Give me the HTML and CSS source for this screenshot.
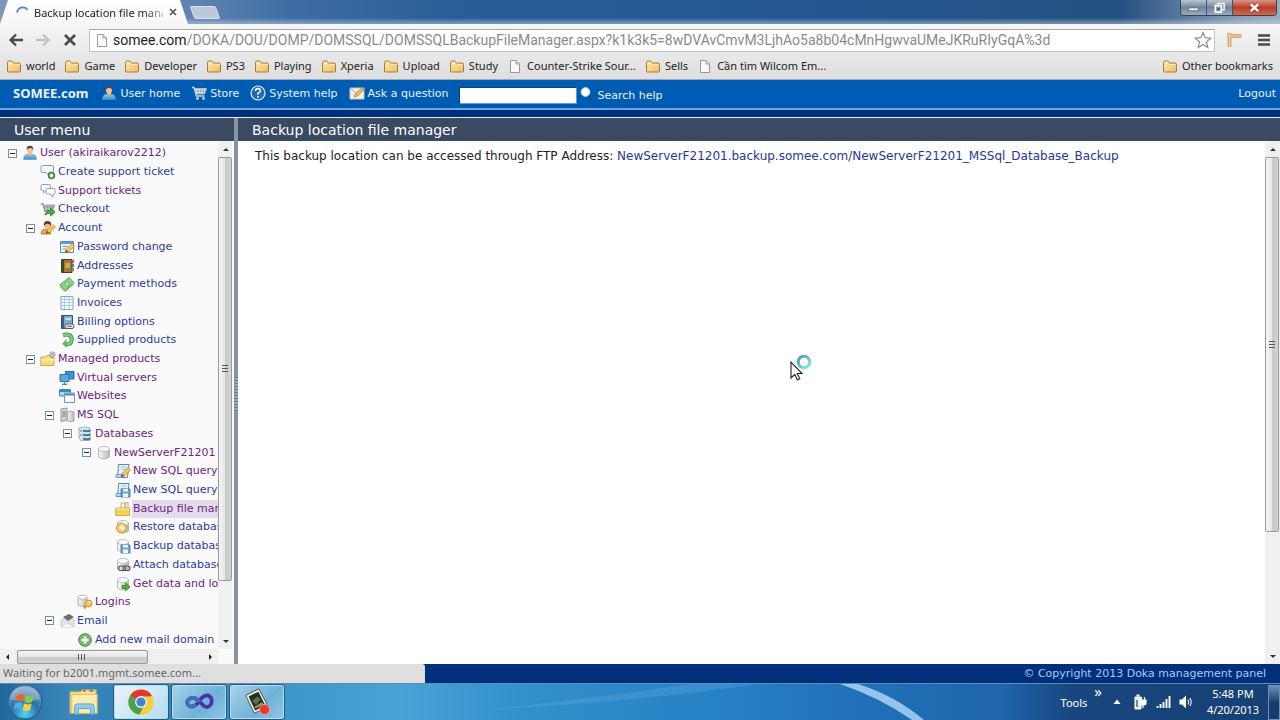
FILE: index.html
```html
<!DOCTYPE html>
<html lang="en">
<head>
<meta charset="utf-8">
<title>Backup location file manager</title>
<link rel="stylesheet" href="styles.css">
</head>
<body>
<svg class="defs" aria-hidden="true">
  <defs>
    <linearGradient id="gFolder" x1="0" y1="0" x2="1" y2="1"><stop offset="0" stop-color="#fde9b0"/><stop offset="1" stop-color="#f3bd62"/></linearGradient>
    <linearGradient id="gPerson" x1="0" y1="0" x2="0" y2="1"><stop offset="0" stop-color="#8fd0f0"/><stop offset="1" stop-color="#3a8fc4"/></linearGradient>
    <linearGradient id="gCyl" x1="0" y1="0" x2="1" y2="0"><stop offset="0" stop-color="#fdfdfd"/><stop offset="1" stop-color="#b5b5b5"/></linearGradient>
    <radialGradient id="gOrb" cx=".5" cy=".85" r=".9"><stop offset="0" stop-color="#4fd8f8"/><stop offset=".45" stop-color="#2a6fa8"/><stop offset="1" stop-color="#8fb4d0"/></radialGradient>
    <linearGradient id="gRing" x1="0" y1="0" x2="1" y2="1"><stop offset="0" stop-color="#4a9a9a"/><stop offset=".5" stop-color="#6fc4c0"/><stop offset="1" stop-color="#8af0dc"/></linearGradient>
  </defs>
  <symbol id="folder" viewBox="0 0 16 16"><path d="M1.500 13V4.500Q1.500 3 3 3H5.500Q6.500 3 7 4.500L7.500 5H13Q14.500 5 14.500 6.500V13Q14.500 14 13.500 14H2.500Q1.500 14 1.500 13Z" fill="url(#gFolder)" stroke="#a87c38"/><path d="M3 5H6M9 6.500H13" stroke="#fff3cf"/></symbol>
  <symbol id="page" viewBox="0 0 16 16"><path d="M3.500 2.500H9L12.500 6V14.500H3.500Z" fill="#fafafa" stroke="#999"/><path d="M9 2.500V6H12.500" fill="none" stroke="#999"/></symbol>
  <symbol id="person" viewBox="0 0 16 16"><path d="M1.500 14.500Q1.500 10 5 9L8 11L11 9Q14.500 10 14.500 14.500Z" fill="url(#gPerson)" stroke="#5b9cc2" stroke-width=".6"/><path d="M6 7H10V9.500L8 11L6 9.500Z" fill="#e9b58e"/><ellipse cx="8" cy="5" rx="3" ry="3.800" fill="#f0c29c"/><path d="M4.800 5Q4 .8 8 .8Q11.800 1 11.200 5Q10.500 3 8 3Q5.500 3.200 4.800 5Z" fill="#5d4335"/></symbol>
  <symbol id="cart" viewBox="0 0 16 16"><path d="M1 3H3L5 10.500H13" fill="none" stroke="#8c8c8c" stroke-width="1.300"/><path d="M3.500 4H15L13 9H5Z" fill="#c9d0d2" stroke="#8b9396" stroke-width=".7"/><path d="M4 6H14M7 4V9M10 4V9M12.500 4V9" stroke="#7f888c" stroke-width=".7"/><circle cx="6" cy="13" r="1.300" fill="#777"/><circle cx="12" cy="13" r="1.300" fill="#777"/></symbol>
  <symbol id="storecart" viewBox="0 0 16 16"><path d="M1 2.500H3L5.500 11H13.500" fill="none" stroke="#c9d3dc" stroke-width="1.500"/><path d="M3.500 3.500H15.500L13.500 9H5Z" fill="#e6ecf1" stroke="#bcc9d4" stroke-width=".7"/><path d="M4 6H15M7 4V9M10 4V9M12.500 4V9" stroke="#7c93a8" stroke-width=".7"/><circle cx="6.500" cy="13.500" r="1.400" fill="#c2ccd5"/><circle cx="12.500" cy="13.500" r="1.400" fill="#c2ccd5"/></symbol>
  <symbol id="garrow" viewBox="0 0 16 16"><path d="M7 9.500H10.500V7L15 11L10.500 15V12.500H7Z" fill="#4fae38" stroke="#2a7d1c" stroke-width=".7"/></symbol>
  <symbol id="pencil" viewBox="0 0 16 16"><path d="M6 14L7 10.500L13 4.500L15.500 7L9.500 13Z" fill="#f5c950" stroke="#b6852b" stroke-width=".7"/><path d="M6 14L7 10.500L9.500 13Z" fill="#7b5a36"/></symbol>
  <symbol id="bubbles" viewBox="0 0 16 16"><path d="M2.500 1.500H9Q10.500 1.500 10.500 3V6Q10.500 7.500 9 7.500H6L3.500 10V7.500H2.500Q1 7.500 1 6V3Q1 1.500 2.500 1.500Z" fill="#f4f8fc" stroke="#7996b3" stroke-width=".9"/><path d="M7.500 5.500H13.500Q15 5.500 15 7V9.500Q15 11 13.500 11H13V14L10 11H7.500Q6 11 6 9.500V7Q6 5.500 7.500 5.500Z" fill="#fff" stroke="#7996b3" stroke-width=".9"/></symbol>
  <symbol id="bubbleadd" viewBox="0 0 16 16"><path d="M2.500 1.500H12Q13.500 1.500 13.500 3V7Q13.500 8.500 12 8.500H9V12L6 8.500H2.500Q1 8.500 1 7V3Q1 1.500 2.500 1.500Z" fill="#f4f8fc" stroke="#7996b3" stroke-width=".9"/><circle cx="11.500" cy="11.500" r="2.800" fill="#fff" stroke="#388c35" stroke-width="1.800"/></symbol>
  <symbol id="checkout" viewBox="0 0 16 16"><use href="#cart"/><use href="#garrow"/></symbol>
  <symbol id="account" viewBox="0 0 16 16"><path d="M1 14Q1 9.500 5 9L9 10L11 14Z" fill="#e7a45b" stroke="#a56b2d" stroke-width=".7"/><circle cx="7.500" cy="5.500" r="3.200" fill="#f0bd90"/><path d="M4 6Q3 1 8 1Q12 1.500 11 6Q9 3 6 4Z" fill="#573927"/><use href="#pencil"/></symbol>
  <symbol id="form" viewBox="0 0 16 16"><path d="M1.500 2.500H14.500V13.500H1.500Z" fill="#eef6fd" stroke="#5b8fc4"/><path d="M2 3H14V5H2Z" fill="#5f9edb"/><path d="M3.500 7.500H9M3.500 10H7" stroke="#76a0c8"/><use href="#pencil"/></symbol>
  <symbol id="book" viewBox="0 0 16 16"><path d="M2.500 1.500H13V14.500H2.500Z" fill="#a5763b" stroke="#4c4229"/><path d="M3 2H5V14H3Z" fill="#394a2c"/><path d="M6.500 5H11V10H6.500Z" fill="#cea94e"/><path d="M14 2V5" stroke="#d54b4b" stroke-width="2"/><path d="M14 6V9" stroke="#4b78d5" stroke-width="2"/><path d="M14 10V13" stroke="#51a94b" stroke-width="2"/></symbol>
  <symbol id="money" viewBox="0 0 16 16"><path d="M1 9L10 1.500L15 6.500L6 14.500Z" fill="#8fd08a" stroke="#4d9b52" stroke-width=".9"/><path d="M1 10.500L6 15.500L15 8" fill="none" stroke="#5dab60"/><circle cx="8" cy="8" r="2" fill="#c3ebbb" stroke="#5ba75d" stroke-width=".7"/></symbol>
  <symbol id="invoice" viewBox="0 0 16 16"><path d="M2 1.500H14V14.500H2Z" fill="#f5faff" stroke="#7fa8d0"/><path d="M2 4.500H14M2 7.500H14M2 10.500H14M5.500 2V14M10 2V14" stroke="#a3c6e6" stroke-width=".9"/></symbol>
  <symbol id="billing" viewBox="0 0 16 16"><path d="M2.500 1.500H13.500V14.500H2.500Z" fill="#7faad2" stroke="#31557c"/><path d="M3 2H5V14H3Z" fill="#395f88"/><path d="M6.500 4H12V6H6.500Z" fill="#c8def2"/><rect x="6" y="10" width="9" height="4.500" rx="2" fill="#eee" stroke="#4e5a66"/><path d="M8 12.300H13" stroke="#4e5a66"/></symbol>
  <symbol id="supplied" viewBox="0 0 16 16"><path d="M4 3Q13 1 12.800 8Q12 13 6 12.500" fill="none" stroke="#328c3a" stroke-width="4"/><path d="M4 3Q13 1 12.800 8Q12 13 6 12.500" fill="none" stroke="#83c985" stroke-width="2.400"/><path d="M7.500 7L3 12L8 15.500Z" fill="#62b467"/></symbol>
  <symbol id="managed" viewBox="0 0 16 16"><path d="M.8 6H5L6.500 4.500H10L10.500 6.500H14V14.500H.8Z" fill="#f6dc79" stroke="#c29c3a" stroke-width=".8"/><path d="M1 9H14" stroke="#fff2b8" stroke-width="1.500"/><circle cx="12.500" cy="3.500" r="2.600" fill="#d9cfdb" stroke="#a295a5"/><circle cx="12.500" cy="3.500" r=".8" fill="#776a7a"/></symbol>
  <symbol id="vserver" viewBox="0 0 16 16"><path d="M6.500 1.500H15V9H6.500Z" fill="#3d94d4" stroke="#2c699e"/><path d="M1 4.500H10V11.500H1Z" fill="#56a9df" stroke="#2d75ac"/><path d="M5.500 11V14M3 14.300H8" stroke="#6d8294" stroke-width="1.300"/></symbol>
  <symbol id="website" viewBox="0 0 16 16"><path d="M.5 1.500H11.500V8H.5Z" fill="#a9d8ea" stroke="#3e90b1"/><path d="M1 2H11V4H1Z" fill="#348faf"/><path d="M5.500 5H15.500V14.500H5.500Z" fill="#f5fbfe" stroke="#7197b1"/><path d="M6 5.500H15V7.500H6Z" fill="#3e92bf"/></symbol>
  <symbol id="mssql" viewBox="0 0 16 16"><path d="M2 2L8 1V13L2 14.500Z" fill="#d3d3d3" stroke="#9b9b9b"/><path d="M3.500 5H6.500M3.500 7H6.500M3.500 9H6.500" stroke="#747474"/><path d="M8.500 5Q11.500 3.500 15 5V14Q11.500 15.500 8.500 14Z" fill="url(#gCyl)" stroke="#aaa"/></symbol>
  <symbol id="stack" viewBox="0 0 16 16"><path d="M2 2L7 1L13 2V14.500H4L2 12Z" fill="#d8eaf4" stroke="#7d9bb0" stroke-width=".7"/><path d="M6 4.500Q9.500 6 13.500 4.500M6 8.500Q9.500 10 13.500 8.500M6 12.500Q9.500 14 13.500 12.500" fill="none" stroke="#487795" stroke-width="2"/><path d="M3 5H5M3 9H5" stroke="#506f85"/></symbol>
  <symbol id="cyl" viewBox="0 0 16 16"><path d="M2.500 4V12Q8 16 13.500 12V4Z" fill="url(#gCyl)" stroke="#aaa" stroke-width=".8"/><ellipse cx="8" cy="4" rx="5.500" ry="2.500" fill="#f8f8f8" stroke="#b5b5b5" stroke-width=".8"/></symbol>
  <symbol id="script" viewBox="0 0 16 16"><path d="M3.500 1.500H14L12.500 14.500H1.500Q3 13 3 10Z" fill="#e5f2fc" stroke="#5689bf"/><path d="M1 11.500H7V14.500H1Z" fill="#b9d8f2" stroke="#5689bf" stroke-width=".7"/><path d="M6 4H11M6 6.500H11" stroke="#a1c2df"/></symbol>
  <symbol id="query" viewBox="0 0 16 16"><use href="#script"/><use href="#pencil"/></symbol>
  <symbol id="disk" viewBox="0 0 16 16"><path d="M6 7H15V15H6Z" fill="#6fa3d6" stroke="#3d70a6" stroke-width=".8"/><path d="M8 7H13V9.500H8ZM8 11.500H13V15H8Z" fill="#edf6fd"/></symbol>
  <symbol id="querysave" viewBox="0 0 16 16"><use href="#script"/><use href="#disk"/></symbol>
  <symbol id="fileman" viewBox="0 0 16 16"><path d="M6 2H10V8H6ZM10.500 1.500H13V8H10.500Z" fill="#fff5d6" stroke="#b2a06b" stroke-width=".8"/><path d="M.8 7H14.500V14.500H.8Z" fill="#f6d05a" stroke="#c79b30" stroke-width=".8"/><path d="M1.500 8H14" stroke="#fff0b0"/></symbol>
  <symbol id="restore" viewBox="0 0 16 16"><use href="#cyl"/><circle cx="6.500" cy="9" r="5" fill="#f3cb62" stroke="#b58a2c" stroke-width=".8"/><path d="M3.500 8.500L8 5.500V8H10V10H8V12Z" fill="#fff7d6"/></symbol>
  <symbol id="dbsave" viewBox="0 0 16 16"><use href="#cyl"/><use href="#disk"/></symbol>
  <symbol id="attach" viewBox="0 0 16 16"><use href="#cyl"/><rect x="3.500" y="9" width="7" height="4.500" rx="2.200" fill="#ddd" stroke="#555" stroke-width="1.200"/><rect x="8" y="9" width="7" height="4.500" rx="2.200" fill="none" stroke="#555" stroke-width="1.200"/></symbol>
  <symbol id="getdata" viewBox="0 0 16 16"><use href="#cyl"/><use href="#garrow"/></symbol>
  <symbol id="logins" viewBox="0 0 16 16"><path d="M1 3V11Q5 14 10 11V3Z" fill="url(#gCyl)" stroke="#999" stroke-width=".8"/><ellipse cx="5.500" cy="3.200" rx="4.500" ry="2" fill="#fff" stroke="#aaa" stroke-width=".8"/><path d="M7 14.500L10 10.500" stroke="#d69b24" stroke-width="2.400"/><circle cx="11.500" cy="9.500" r="3.500" fill="#f3c64f" stroke="#c08e27" stroke-width=".8"/><circle cx="12.500" cy="8.500" r="1" fill="#fff3c8"/></symbol>
  <symbol id="email" viewBox="0 0 16 16"><path d="M2 7L8 4L15 7V14H2Z" fill="#e3e3e3" stroke="#c2c2c2" stroke-width=".8"/><path d="M2 14L8 9.500L15 14" fill="#f8f8f8" stroke="#ccc" stroke-width=".8"/><path d="M4 4L10 1L15 4L9 8Z" fill="#6d6d6d"/></symbol>
  <symbol id="add" viewBox="0 0 16 16"><circle cx="8" cy="8" r="6.300" fill="#72bd69" stroke="#438b3d"/><path d="M8 4.500V11.500M4.500 8H11.500" stroke="#fff" stroke-width="2.400"/></symbol>
</svg>

<div class="browser">
  <div class="titlebar">
    <div class="tab">
      <svg class="spinner" viewBox="0 0 16 16"><path d="M2 8Q3.500 2.500 8.500 2.500Q12 2.700 13.500 5" fill="none" stroke="#5c7fc0" stroke-width="2"/></svg>
      <span class="tab-title">Backup location file manager</span>
      <button class="tab-close" aria-label="Close tab"><svg viewBox="0 0 8 8"><path d="M1 1L7 7M7 1L1 7" stroke="#555" stroke-width="1.700"/></svg></button>
    </div>
    <button class="new-tab" aria-label="New tab"></button>
    <div class="window-buttons">
      <button aria-label="Minimize"><svg viewBox="0 0 14 14"><rect x="2" y="7.500" width="10" height="3" fill="#fff" stroke="#4b5a6c" stroke-width=".7"/></svg></button>
      <button aria-label="Restore"><svg viewBox="0 0 14 14"><path d="M5 2.500H12V9.500H5Z" fill="none" stroke="#fff" stroke-width="1.500"/><path d="M2.500 5H9V12H2.500Z" fill="#8493a6" stroke="#fff" stroke-width="1.800"/><path d="M5 7.500H7V9.500H5Z" fill="#34435a"/></svg></button>
      <button class="win-close" aria-label="Close"><svg viewBox="0 0 14 14"><path d="M3 3.500L11 11M11 3.500L3 11" stroke="#6b2a20" stroke-width="3.800"/><path d="M3 3.500L11 11M11 3.500L3 11" stroke="#fff" stroke-width="2.600"/></svg></button>
    </div>
  </div>
  <div class="toolbar">
    <button class="nav" aria-label="Back"><svg viewBox="0 0 16 16"><path d="M15 8H3M8 2.500L2.500 8L8 13.500" fill="none" stroke="#4a4a4a" stroke-width="2.300"/></svg></button>
    <button class="nav" aria-label="Forward"><svg viewBox="0 0 16 16"><path d="M1 8H13M8 2.500L13.500 8L8 13.500" fill="none" stroke="#c3c3c3" stroke-width="2.300"/></svg></button>
    <button class="nav" aria-label="Stop"><svg viewBox="0 0 16 16"><path d="M3 3L13 13M13 3L3 13" stroke="#484848" stroke-width="2.600"/></svg></button>
    <div class="omnibox">
      <svg class="i16"><use href="#page"/></svg>
      <label for="url">somee.com</label>
      <input id="url" type="text" value="/DOKA/DOU/DOMP/DOMSSQL/DOMSSQLBackupFileManager.aspx?k1k3k5=8wDVAvCmvM3LjhAo5a8b04cMnHgwvaUMeJKRuRIyGqA%3d">
      <button class="star" aria-label="Bookmark"><svg viewBox="0 0 18 18"><path d="M9 1.500L11.200 6.700L16.800 7.200L12.500 10.900L13.800 16.400L9 13.500L4.200 16.400L5.500 10.900L1.200 7.200L6.800 6.700Z" fill="#fff" stroke="#8b8b8b" stroke-width="1.200"/></svg></button>
    </div>
    <button class="nav ext" aria-label="Extension"><svg viewBox="0 0 16 16"><path d="M3.500 1V15M1 4H15.500" stroke="#d8aa78" stroke-width="4"/><path d="M1 4H15M3.500 2V15" stroke="#f3d4ae" stroke-width="1"/></svg></button>
    <button class="nav" aria-label="Menu"><svg viewBox="0 0 16 16"><path d="M2 3.500H14M2 8H14M2 12.500H14" stroke="#4a4a4a" stroke-width="2.600"/></svg></button>
  </div>
  <nav class="bookmarks">
    <a href="#"><svg class="i16"><use href="#folder"/></svg>world</a>
    <a href="#"><svg class="i16"><use href="#folder"/></svg>Game</a>
    <a href="#"><svg class="i16"><use href="#folder"/></svg>Developer</a>
    <a href="#"><svg class="i16"><use href="#folder"/></svg>PS3</a>
    <a href="#"><svg class="i16"><use href="#folder"/></svg>Playing</a>
    <a href="#"><svg class="i16"><use href="#folder"/></svg>Xperia</a>
    <a href="#"><svg class="i16"><use href="#folder"/></svg>Upload</a>
    <a href="#"><svg class="i16"><use href="#folder"/></svg>Study</a>
    <a href="#"><svg class="i16"><use href="#page"/></svg>Counter-Strike Sour...</a>
    <a href="#"><svg class="i16"><use href="#folder"/></svg>Sells</a>
    <a href="#"><svg class="i16"><use href="#page"/></svg>Cần tìm Wilcom Em...</a>
    <a href="#" class="other"><svg class="i16"><use href="#folder"/></svg>Other bookmarks</a>
  </nav>
</div>

<header class="site-header">
  <a class="brand" href="#">SOMEE.com</a>
  <a href="#"><svg class="i16"><use href="#person"/></svg>User home</a>
  <a href="#"><svg class="i16"><use href="#storecart"/></svg>Store</a>
  <a href="#"><svg class="i16" viewBox="0 0 16 16"><circle cx="8" cy="8" r="7" fill="#2468b0" stroke="#e8f1fa" stroke-width="1.200"/><path d="M5.500 6Q5.500 3.500 8 3.500Q10.500 3.600 10.500 6Q10.300 7.300 8 8.300V9.700M8 11V12.700" fill="none" stroke="#fff" stroke-width="1.500"/></svg>System help</a>
  <a href="#"><svg class="i16" viewBox="0 0 16 16"><path d="M1 3H15V14H1Z" fill="#f5f2e8" stroke="#c8c6ba"/><path d="M1 3L8 9L15 3" fill="none" stroke="#8fa5b8"/><path d="M5 12L6 9L12.500 3L15 5L8.500 11Z" fill="#edb85a" stroke="#a57834" stroke-width=".6"/></svg>Ask a question</a>
  <form class="search">
    <input id="q" type="text" aria-label="Search help">
    <button type="button"><svg class="i16" viewBox="0 0 16 16"><path d="M9.500 8.500L14 13" stroke="#16508e" stroke-width="2.400"/><circle cx="6.500" cy="5" r="4.300" fill="#fff" stroke="#d8ecfa"/></svg><span>Search help</span></button>
  </form>
  <a class="logout" href="#">Logout</a>
</header>
<div class="strip"></div>

<div class="workspace">
  <aside class="sidebar">
    <h2>User menu</h2>
    <div class="tree-row">
      <ul class="tree">
        <li class="l0"><button aria-label="Collapse"></button><svg class="i16"><use href="#person"/></svg><a class="v" href="#">User (akiraikarov2212)</a></li>
        <li class="l1"><svg class="i16"><use href="#bubbleadd"/></svg><a href="#">Create support ticket</a></li>
        <li class="l1"><svg class="i16"><use href="#bubbles"/></svg><a class="v" href="#">Support tickets</a></li>
        <li class="l1"><svg class="i16"><use href="#checkout"/></svg><a href="#">Checkout</a></li>
        <li class="l1"><button aria-label="Collapse"></button><svg class="i16"><use href="#account"/></svg><a href="#">Account</a></li>
        <li class="l2"><svg class="i16"><use href="#form"/></svg><a href="#">Password change</a></li>
        <li class="l2"><svg class="i16"><use href="#book"/></svg><a href="#">Addresses</a></li>
        <li class="l2"><svg class="i16"><use href="#money"/></svg><a href="#">Payment methods</a></li>
        <li class="l2"><svg class="i16"><use href="#invoice"/></svg><a href="#">Invoices</a></li>
        <li class="l2"><svg class="i16"><use href="#billing"/></svg><a href="#">Billing options</a></li>
        <li class="l2"><svg class="i16"><use href="#supplied"/></svg><a href="#">Supplied products</a></li>
        <li class="l1"><button aria-label="Collapse"></button><svg class="i16"><use href="#managed"/></svg><a class="v" href="#">Managed products</a></li>
        <li class="l2"><svg class="i16"><use href="#vserver"/></svg><a class="v" href="#">Virtual servers</a></li>
        <li class="l2"><svg class="i16"><use href="#website"/></svg><a class="v" href="#">Websites</a></li>
        <li class="l2"><button aria-label="Collapse"></button><svg class="i16"><use href="#mssql"/></svg><a class="v" href="#">MS SQL</a></li>
        <li class="l3"><button aria-label="Collapse"></button><svg class="i16"><use href="#stack"/></svg><a class="v" href="#">Databases</a></li>
        <li class="l4"><button aria-label="Collapse"></button><svg class="i16"><use href="#cyl"/></svg><a class="v" href="#">NewServerF21201</a></li>
        <li class="l5"><svg class="i16"><use href="#query"/></svg><a class="v" href="#">New SQL query</a></li>
        <li class="l5"><svg class="i16"><use href="#querysave"/></svg><a href="#">New SQL query</a></li>
        <li class="l5 selected"><svg class="i16"><use href="#fileman"/></svg><a class="v" href="#">Backup file manager</a></li>
        <li class="l5"><svg class="i16"><use href="#restore"/></svg><a href="#">Restore database</a></li>
        <li class="l5"><svg class="i16"><use href="#dbsave"/></svg><a href="#">Backup database</a></li>
        <li class="l5"><svg class="i16"><use href="#attach"/></svg><a href="#">Attach database</a></li>
        <li class="l5"><svg class="i16"><use href="#getdata"/></svg><a class="v" href="#">Get data and log</a></li>
        <li class="l3"><svg class="i16"><use href="#logins"/></svg><a class="v" href="#">Logins</a></li>
        <li class="l2"><button aria-label="Collapse"></button><svg class="i16"><use href="#email"/></svg><a href="#">Email</a></li>
        <li class="l3"><svg class="i16"><use href="#add"/></svg><a href="#">Add new mail domain</a></li>
      </ul>
      <div class="vbar side-v"><i class="up"></i><div class="thumb"></div><div class="rest"></div><i class="down"></i></div>
    </div>
    <div class="hbar"><i class="left"></i><div class="thumb"></div><div class="rest"></div><i class="right"></i></div>
  </aside>
  <div class="splitter"></div>
  <main class="content">
    <h2>Backup location file manager</h2>
    <div class="content-row">
      <p>This backup location can be accessed through FTP Address: <a href="#">NewServerF21201.backup.somee.com/NewServerF21201_MSSql_Database_Backup</a></p>
      <div class="vbar main-v"><i class="up"></i><div class="thumb"></div><div class="rest"></div><i class="down"></i></div>
    </div>
  </main>
</div>

<footer class="site-footer">
  <span class="status">Waiting for b2001.mgmt.somee.com...</span>
  <span class="copy">© Copyright 2013 Doka management panel</span>
</footer>

<div class="taskbar">
  <svg class="streaks" viewBox="0 0 1280 37" preserveAspectRatio="none"><path d="M490 26Q640 18 760 0H690Q600 14 490 26Z" fill="#6db4e6" opacity=".25"/><path d="M840 0H858Q895 12 924 37H912Q880 14 840 0Z" fill="#a9d2f5" opacity=".85"/></svg>
  <button class="start" aria-label="Start"><svg viewBox="0 0 36 36"><circle cx="18" cy="18" r="17" fill="url(#gOrb)" stroke="#2c5878"/><path d="M3 15Q5 3 18 3Q31 3 33 15Q18 20 3 15Z" fill="#fff" opacity=".25"/><path d="M10 11Q14 8.500 17.500 11L16 17.500Q12 15.500 8.500 17.500Z" fill="#f0652d"/><path d="M19 11.500Q23 13.500 27 11.500L25 18Q21 20 17.500 18Z" fill="#8fca3d"/><path d="M8 19Q12 17 15.500 19L14 25.500Q10.500 23.500 6.500 25.500Z" fill="#4cadea"/><path d="M17 19.500Q21 21.500 24.700 19.500L23 26Q19 28 15.500 26Z" fill="#fbd03b"/></svg></button>
  <button class="task plain" aria-label="Explorer"><svg viewBox="0 0 36 32"><path d="M3 5H14L16 3H31V28H3Z" fill="#f3dc8a" stroke="#d0a94b"/><path d="M5 8H32V28H5Z" fill="#fbedb0" stroke="#dfbd62"/><path d="M7 4H11" stroke="#4faa51" stroke-width="2"/><path d="M17 4H20" stroke="#d85a49" stroke-width="2"/><path d="M24 4H28" stroke="#4586c9" stroke-width="2"/><path d="M8 29V21Q8 18 11 18H26Q29 18 29 21V29H25V23H12V29Z" fill="#8fcbea" stroke="#5aa4cf"/></svg></button>
  <button class="task active" aria-label="Chrome"><svg viewBox="0 0 32 32"><circle cx="16" cy="16" r="13.500" fill="#f6cf3d"/><path d="M16 16L4.300 9.300A13.500 13.500 0 0 1 27.700 9.300Z" fill="#db3c2f"/><path d="M4.300 9.300A13.500 13.500 0 0 0 14.500 29.400L20 18L16 16Z" fill="#4ba24a"/><path d="M16 10H28Q31 19 25 26Q21 29.500 14.500 29.400L21 19Z" fill="#f6cf3d"/><circle cx="16" cy="16" r="6.300" fill="#f5f5f5"/><circle cx="16" cy="16" r="4.900" fill="#3f82cf"/></svg></button>
  <button class="task" aria-label="Visual Studio"><svg viewBox="0 0 32 32"><path d="M17 16Q12 10 7 12Q2 14.500 4 18.500Q8 23.500 14 18Q20 8 26 9Q31 12 29 18Q26 23.500 21 20Z" fill="none" stroke="#4a35a0" stroke-width="4"/><path d="M17 16Q12 10 7 12Q2 14.500 4 18.500Q8 23 13 19" fill="none" stroke="#3b72b8" stroke-width="3.500"/></svg></button>
  <button class="task" aria-label="Screen recorder"><svg viewBox="0 0 32 32"><path d="M4 9L18 2L28 21L13 28Z" fill="#f0f0ec" stroke="#4a4f4a"/><path d="M7 10L17.500 5L25 20L14 25Z" fill="#27331f"/><path d="M11 15L16 10L20 13L15 19Z" fill="#59734a"/><path d="M14 22L22 17" stroke="#8fa374" stroke-width="2"/><circle cx="24" cy="24" r="5.500" fill="#e23d2f" stroke="#f6aaa0"/></svg></button>
  <div class="tray">
    <span>Tools</span><span class="chev">»</span>
    <svg class="i8" viewBox="0 0 8 8"><path d="M4 1.500L7.500 6H.5Z" fill="#fff"/></svg>
    <svg class="i16" viewBox="0 0 16 16"><path d="M3 3H9V15H3Z" fill="#e9eef3" stroke="#fff"/><path d="M4.500 1.500H7.500" stroke="#fff" stroke-width="2"/><path d="M5 6V13" stroke="#41668e" stroke-width="1.500"/><path d="M8 6H14V9Q14 11 11 11Q8 11 8 9ZM9.500 3V6M12.500 3V6M11 11V14" fill="#fff" stroke="#fff" stroke-width="1.200"/></svg>
    <svg class="i16" viewBox="0 0 16 16"><path d="M2.500 12V14M5.500 10V14M8.500 8V14M11.500 5V14M14.500 2V14" stroke="#fff" stroke-width="1.900"/></svg>
    <svg class="i16" viewBox="0 0 16 16"><path d="M1.500 5.500H4L8 1.500V14.500L4 10.500H1.500Z" fill="#fff"/><path d="M10 5.500Q11.500 8 10 10.500M12 4Q14.300 8 12 12" fill="none" stroke="#dfe9f3" stroke-width="1.200"/></svg>
    <div class="clock"><span>5:48 PM</span><span>4/20/2013</span></div>
    <button class="peek" aria-label="Show desktop"></button>
  </div>
</div>

<svg class="cursor" viewBox="0 0 24 28"><circle cx="15" cy="9" r="5.800" fill="#fff" stroke="url(#gRing)" stroke-width="3"/><path d="M2 9V25L5.800 21.500L8.300 27L10.800 25.800L8.300 20.500H13Z" fill="#fff" stroke="#222" stroke-width="1.100"/></svg>
</body>
</html>
```
FILE: styles.css
```css
* { box-sizing: border-box; }
body {
  margin: 0;
  min-height: 100vh;
  display: flex;
  flex-direction: column;
  overflow: hidden;
  position: relative;
  font-family: "DejaVu Sans", Verdana, sans-serif;
  font-size: 12px;
  color: #222;
  background: #fff;
}
a { text-decoration: none; color: inherit; }
button { border: 0; padding: 0; margin: 0; background: none; font: inherit; color: inherit; display: flex; align-items: center; justify-content: center; }
.defs { position: absolute; width: 0; height: 0; }
.i16 { width: 16px; height: 16px; flex: none; }
.i8 { width: 8px; height: 8px; flex: none; }

/* Browser chrome */
.browser { font-family: "Noto Sans", "Open Sans", sans-serif; flex: none; }
.titlebar {
  height: 24px;
  display: flex;
  background: linear-gradient(to bottom, transparent 18px, rgba(200, 215, 232, .45) 23px), linear-gradient(to right, #7c98b9 0, #5f83af 200px, #3f6da3 290px, #295e98 450px, #245791 850px, #24507f 1120px, #8a9fb8 1240px, #9bacc0);
}
.tab {
  width: 188px;
  display: flex;
  align-items: center;
  padding: 0 11px 0 15px;
  background: linear-gradient(#fff, #f6f6f6);
  clip-path: polygon(8px 0, 180px 0, 100% 100%, 0 100%);
  font-size: 11px;
  color: #222;
}
.spinner { width: 15px; height: 15px; flex: none; margin-right: 4px; }
.tab-title { flex: 1; overflow: hidden; white-space: nowrap; mask-image: linear-gradient(to right, #000 85%, rgba(0, 0, 0, .3)); }
.tab-close { width: 8px; margin: 0 0 0 6px; flex: none; }
.tab-close svg { width: 8px; height: 8px; }
.new-tab { width: 26px; height: 13px; margin: 6px 0 0 4px; background: #bcc9d9; border: 1px solid #dbe4ee; border-radius: 2px; transform: skewX(20deg); }
.window-buttons { margin: 0 3px 0 auto; height: 16px; display: flex; border: 1px solid #34435a; border-top: 0; border-radius: 0 0 4px 4px; overflow: hidden; }
.window-buttons button { width: 26px; background: linear-gradient(#b8c5d5, #71839b 50%, #9aaabf); border-right: 1px solid #43536a; }
.window-buttons .win-close { width: 43px; border: 0; background: linear-gradient(#d99585, #bb3d28 50%, #d36a4a); }
.window-buttons svg { width: 13px; height: 13px; }
.toolbar { height: 30px; display: flex; align-items: center; padding: 2px 8px 0; background: linear-gradient(#f6f6f6, #e9e9e9); }
.nav { width: 16px; height: 16px; margin-right: 11px; flex: none; }
.nav svg { width: 16px; height: 16px; }
.nav:last-child { margin: 0; }
.ext { margin: 0 14px 0 11px; }
.omnibox { flex: 1; height: 23px; display: flex; align-items: center; background: #fff; border: 1px solid #c0c0c0; border-top-color: #a9a9a9; padding: 0 2px 0 4px; font-family: Roboto, "Noto Sans", sans-serif; font-size: 14px; }
.omnibox label { color: #222; margin-left: 3px; }
.omnibox input { flex: 1; min-width: 0; border: 0; padding: 0; outline: 0; background: none; font: inherit; color: #8a8a8a; }
.star svg { width: 18px; height: 18px; }
.bookmarks { height: 26px; display: flex; align-items: center; gap: 9px; padding: 0 7px 2px 6px; background: linear-gradient(#e8e8e8, #dedede); border-bottom: 1px solid #9aa7b8; font-size: 11px; white-space: nowrap; }
.bookmarks a { display: flex; align-items: center; gap: 4px; color: #222; }
.bookmarks .other { margin-left: auto; }

/* Site header */
.site-header { height: 28px; flex: none; display: flex; align-items: center; gap: 11px; padding: 0 4px 2px 13px; background: #005cb2; color: #e9f3fc; font-size: 11px; white-space: nowrap; }
.site-header > a { display: flex; align-items: center; gap: 3px; }
.site-header .brand { font: bold 13px "Noto Sans", "Open Sans", sans-serif; margin-right: 2px; }
.site-header .logout { margin-left: auto; }
.search { display: flex; align-items: center; gap: 2px; padding-top: 4px; }
.search input { width: 118px; height: 17px; border: 1px solid #123f73; border-right-color: #5b9bd8; border-bottom-color: #5b9bd8; background: #fff; padding: 0 2px; font-size: 11px; }
.search button { gap: 2px; }
.strip { height: 10px; flex: none; background: #00307c; border-top: 2px solid #6ea6dc; border-bottom: 1px solid #e4edf8; }

/* Workspace */
.workspace { flex: 1; display: flex; min-height: 0; }
h2 { margin: 0; flex: none; height: 23px; line-height: 24px; font-size: 14px; font-weight: normal; color: #fff; background: #3a4a63; padding: 0 14px; }
.sidebar { width: 234px; flex: none; display: flex; flex-direction: column; background: #fafafa; }
.tree-row { flex: 1; display: flex; min-height: 0; }
.tree { flex: 1; min-width: 0; margin: 0; padding: 3px 0 0; list-style: none; display: flex; flex-direction: column; overflow: hidden; font-size: 11px; }
.tree li { flex: 1; display: flex; align-items: center; white-space: nowrap; }
.tree a { margin-left: 1px; padding: 0 1px; line-height: 18px; color: #2f3a9b; }
.tree a.v { color: #6d2480; }
.tree .selected a { flex: 1; background: #e4dcec; }
.tree .l0 { padding-left: 22px; }
.tree .l1 { padding-left: 40px; }
.tree .l2 { padding-left: 59px; }
.tree .l3 { padding-left: 77px; }
.tree .l4 { padding-left: 96px; }
.tree .l5 { padding-left: 115px; }
.tree button { width: 9px; height: 9px; margin: 0 5px 0 -14px; border: 1px solid #7590a5; background: linear-gradient(#222, #222) center / 5px 1px no-repeat #fff; }

/* Scroll bars */
.vbar { flex: none; display: flex; flex-direction: column; background: #f0f0f0; }
.side-v { width: 16px; background: linear-gradient(to right, #f0f0f0 14px, #fafafa 14px); }
.main-v { width: 15px; }
.vbar i, .hbar i { flex: none; display: flex; align-items: center; justify-content: center; width: 15px; height: 16px; }
.vbar i::before, .hbar i::before { content: ""; border: 3px solid transparent; }
.vbar .up::before { border-top: 0; border-bottom-color: #333; }
.vbar .down::before { border-bottom: 0; border-top-color: #333; }
.hbar .left::before { border-left: 0; border-right-color: #222; }
.hbar .right::before { border-right: 0; border-left-color: #222; }
.vbar .thumb, .hbar .thumb { display: flex; align-items: center; justify-content: center; border: 1px solid #999; border-radius: 2px; }
.vbar .thumb { width: 14px; background: linear-gradient(to right, #f5f5f5, #e5e5e5 50%, #c8c8c8 55%, #d3d3d3); }
.vbar .thumb::before { content: ""; width: 6px; height: 8px; background: repeating-linear-gradient(#555 0 1px, transparent 1px 3px); }
.side-v .thumb { flex: 424; }
.side-v .rest { flex: 52; }
.main-v .thumb { flex: 375; }
.main-v .rest { flex: 116; }
.hbar { height: 15px; flex: none; display: flex; align-items: center; background: #f0f0f0; border-right: 16px solid #fafafa; }
.hbar .thumb { height: 14px; margin-left: 2px; flex: 130; background: linear-gradient(#f5f5f5, #e5e5e5 50%, #c8c8c8 55%, #d3d3d3); }
.hbar .thumb::before { content: ""; width: 8px; height: 6px; background: repeating-linear-gradient(to right, #555 0 1px, transparent 1px 3px); }
.hbar .rest { flex: 56; }
.splitter { width: 4px; flex: none; background: repeating-linear-gradient(#6a7684 0 1px, #a0aab5 1px 3px) center 259px / 3px 34px no-repeat #8993a2; }
.content { flex: 1; min-width: 0; display: flex; flex-direction: column; background: #fff; }
.content-row { flex: 1; display: flex; }
.content p { flex: 1; margin: 0; padding: 7px 17px; line-height: 17px; white-space: nowrap; }
.content p a { color: #2a3596; }

/* Footer */
.site-footer { height: 19px; flex: none; display: flex; align-items: center; justify-content: space-between; background: #00307c; color: #a9cbf3; font-size: 11px; }
.status { width: 425px; align-self: stretch; line-height: 17px; padding-left: 3px; background: #dfdfdf; color: #666; border-radius: 0 3px 0 0; font-family: "Noto Sans", "Open Sans", sans-serif; }
.copy { padding-right: 14px; }

/* Taskbar */
.taskbar { height: 37px; flex: none; display: flex; align-items: center; position: relative; border-top: 1px solid #5b8cba; background: linear-gradient(to right, #20679e 0, #3b87bb 70px, #2e82b9 140px, #3d97cb 290px, #49a3d6 400px, #3390cb 520px, #2782c6 700px, #2171b8 860px, #1f65ab 1000px, #18477f 1070px, #174074); font-family: "Noto Sans", "Open Sans", sans-serif; font-size: 11px; color: #fff; }
.taskbar > * { position: relative; }
.taskbar .streaks { position: absolute; inset: 0; width: 100%; height: 100%; }
.start { margin: 0 14px 0 7px; }
.start svg { width: 36px; height: 36px; }
.task { width: 56px; height: 36px; margin-right: 2px; border: 1px solid #255a80; border-radius: 3px; background: linear-gradient(135deg, #a9d3ea, #6fb2d9 60%, #8fc7e6); box-shadow: inset 0 0 0 1px #b9def0; }
.task svg { width: 30px; height: 30px; }
.task.plain { width: 54px; background: none; border: 0; box-shadow: none; }
.task.plain svg { width: 34px; }
.task.active { background: linear-gradient(135deg, #eaf5fa, #b5dcf0); }
.tray { margin-left: auto; display: flex; align-items: center; gap: 7px; height: 100%; }
.chev { font-size: 15px; align-self: flex-start; line-height: 14px; margin-right: 4px; }
.tray .i8 { margin-right: 4px; }
.clock { display: flex; flex-direction: column; align-items: center; line-height: 16px; width: 64px; }
.peek { width: 12px; height: 35px; border: 1px solid #6b8fb5; background: linear-gradient(#6c8fb5, #173d6d 50%); margin-left: -4px; }

.cursor { position: absolute; left: 789px; top: 353px; width: 24px; height: 28px; }
```
